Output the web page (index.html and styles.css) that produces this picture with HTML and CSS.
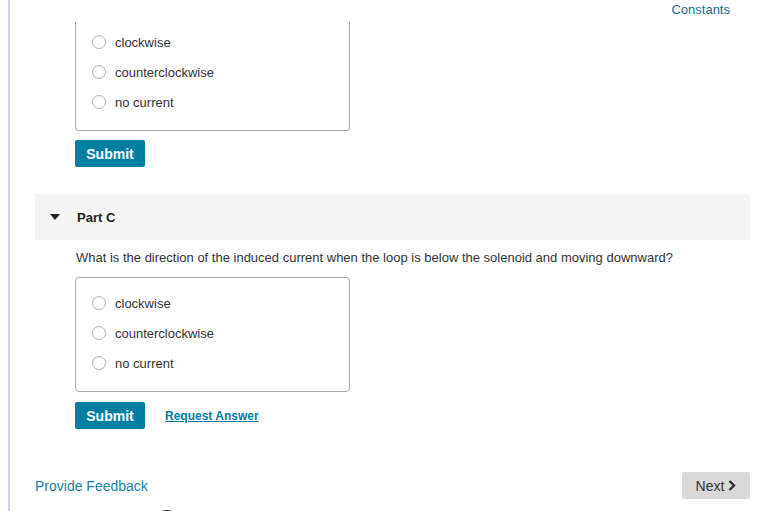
FILE: index.html
```html
<!DOCTYPE html>
<html lang="en">
<head>
  <meta charset="UTF-8" />
  <title>Part C</title>
  <link rel="stylesheet" href="styles.css">
</head>
<body>
  <div class="frame">
    <div class="top-bar">
      <a class="constants" href="#">Constants</a>
    </div>
    <div class="content">
      <div class="choices choices-cut">
        <label class="choice"><span class="radio"></span>clockwise</label>
        <label class="choice"><span class="radio"></span>counterclockwise</label>
        <label class="choice"><span class="radio"></span>no current</label>
      </div>
      <div class="actions">
        <button class="submit">Submit</button>
      </div>

      <div class="part-header">
        <span class="caret"></span>
        <span class="part-title">Part C</span>
      </div>
      <p class="question">What is the direction of the induced current when the loop is below the solenoid and moving downward?</p>
      <div class="choices">
        <label class="choice"><span class="radio"></span>clockwise</label>
        <label class="choice"><span class="radio"></span>counterclockwise</label>
        <label class="choice"><span class="radio"></span>no current</label>
      </div>
      <div class="actions actions-last">
        <button class="submit">Submit</button>
        <a class="request" href="#">Request Answer</a>
      </div>

      <div class="footer">
        <a class="feedback" href="#">Provide Feedback</a>
        <button class="next">Next
          <svg class="chev" width="8" height="11" viewBox="0 0 8 11"><path d="M1.5 1 L6 5.5 L1.5 10" fill="none" stroke="#333" stroke-width="2.4"/></svg>
        </button>
      </div>
    </div>
    <span class="peek"></span>
  </div>
</body>
</html>
```

FILE: styles.css
```css
body {
  margin: 0;
  font-family: "Liberation Sans", Arial, sans-serif;
  color: #333;
  background: #fff;
  overflow: hidden;
}

.frame {
  position: relative;
  margin-left: 8px;
  border-left: 2px solid #c7d5e4;
  height: 511px;
}

.top-bar {
  height: 22px;
  display: flex;
  justify-content: flex-end;
  padding-right: 35px;
}

.constants {
  font-size: 13px;
  line-height: 20px;
  color: #1d6c8c;
  text-decoration: none;
}

.content {
  padding-left: 25px;
  padding-right: 15px;
}

.choices {
  box-sizing: border-box;
  width: 275px;
  margin-left: 40px;
  border: 1px solid #a9a9a9;
  border-radius: 4px;
  padding: 10px 16px 13px;
}

.choices-cut {
  border-top: none;
  border-radius: 0 0 4px 4px;
  padding-top: 5px;
}

.choice {
  display: flex;
  align-items: center;
  height: 30px;
  font-size: 13px;
  color: #333;
}

.radio {
  width: 12px;
  height: 12px;
  border: 1px solid #b3b3b3;
  border-radius: 50%;
  margin-right: 9px;
  box-shadow: inset 0 1px 1px rgba(0, 0, 0, 0.05);
}

.actions {
  display: flex;
  align-items: center;
  margin-left: 40px;
  margin-top: 9px;
}

.actions-last {
  margin-top: 10px;
}

.submit {
  width: 70px;
  height: 27px;
  border: none;
  border-radius: 2px;
  background: #007fa3;
  color: #fff;
  font-family: inherit;
  font-size: 14px;
  font-weight: bold;
  padding: 0;
}

.request {
  margin-left: 20px;
  font-size: 12px;
  font-weight: bold;
  color: #007fa3;
  text-decoration: underline;
}

.part-header {
  display: flex;
  align-items: center;
  height: 46px;
  margin-top: 27px;
  background: #f5f5f5;
}

.caret {
  width: 0;
  height: 0;
  border-left: 5px solid transparent;
  border-right: 5px solid transparent;
  border-top: 6px solid #222;
  margin-left: 15px;
  margin-right: 17px;
}

.part-title {
  font-size: 13px;
  font-weight: bold;
  color: #222;
}

.question {
  margin: 10px 0 11px 41px;
  font-size: 13px;
  line-height: 16px;
  color: #333;
}

.footer {
  display: flex;
  justify-content: space-between;
  align-items: center;
  margin-top: 43px;
}

.feedback {
  font-size: 14px;
  color: #1a7fa8;
  text-decoration: none;
}

.next {
  display: flex;
  align-items: center;
  justify-content: center;
  gap: 4px;
  width: 68px;
  height: 27px;
  border: none;
  border-radius: 2px;
  background: #d9d9d9;
  color: #333;
  font-family: inherit;
  font-size: 14px;
  padding: 0;
}

.peek {
  position: absolute;
  left: 142px;
  top: 510px;
  width: 26px;
  height: 26px;
  border-radius: 50%;
  border: 2px solid #333;
}
```
